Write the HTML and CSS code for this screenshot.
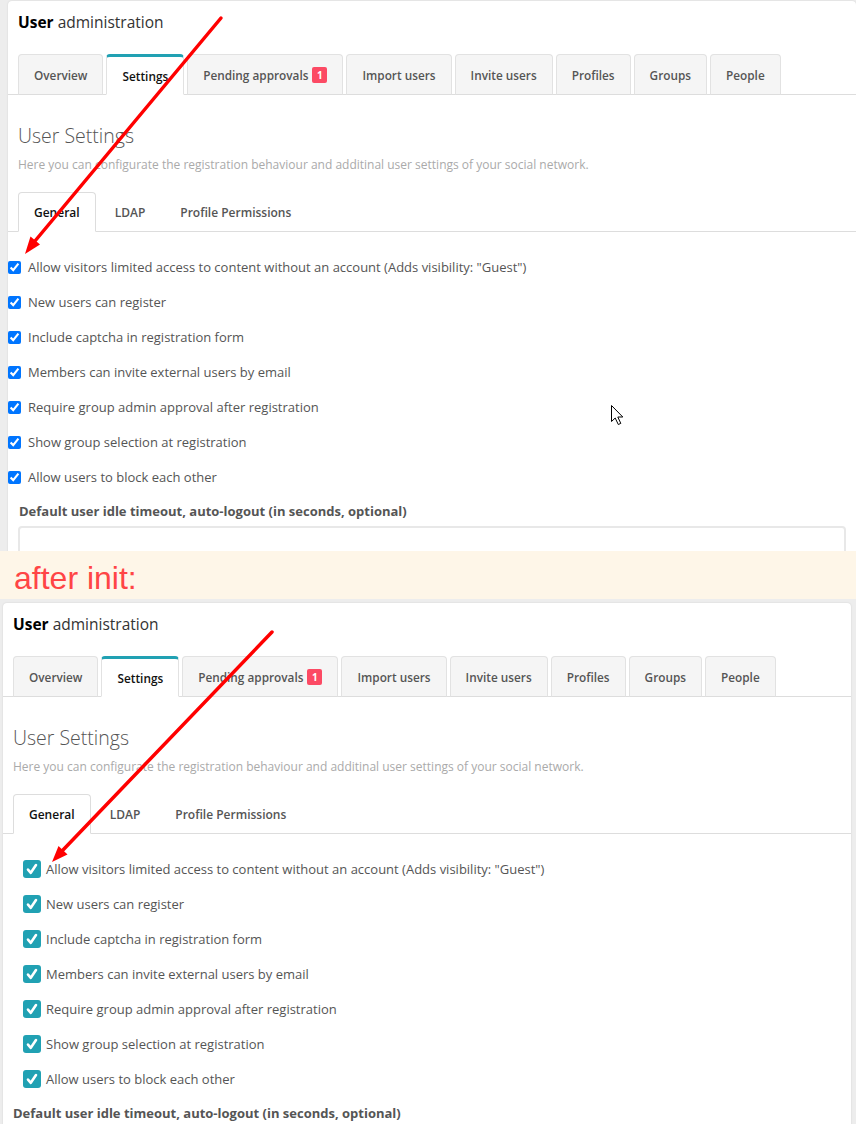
FILE: index.html
```html
<!DOCTYPE html>
<html lang="en">
<head>
<meta charset="UTF-8">
<title>User administration</title>
<link rel="stylesheet" href="styles.css">
</head>
<body>

<!-- before -->
<div class="shot shot-before">
  <div class="panel">
    <div class="panel-heading"><strong>User</strong> administration</div>
    <ul class="tabs">
      <li>Overview</li>
      <li class="active">Settings</li>
      <li>Pending approvals <span class="badge">1</span></li>
      <li>Import users</li>
      <li>Invite users</li>
      <li>Profiles</li>
      <li>Groups</li>
      <li>People</li>
    </ul>
    <div class="panel-body">
      <h1>User Settings</h1>
      <p class="help">Here you can configurate the registration behaviour and additinal user settings of your social network.</p>
    </div>
    <ul class="subtabs">
      <li class="active">General</li>
      <li>LDAP</li>
      <li>Profile Permissions</li>
    </ul>
    <div class="form">
      <label class="check"><input type="checkbox" checked>Allow visitors limited access to content without an account (Adds visibility: "Guest")</label>
      <label class="check"><input type="checkbox" checked>New users can register</label>
      <label class="check"><input type="checkbox" checked>Include captcha in registration form</label>
      <label class="check"><input type="checkbox" checked>Members can invite external users by email</label>
      <label class="check"><input type="checkbox" checked>Require group admin approval after registration</label>
      <label class="check"><input type="checkbox" checked>Show group selection at registration</label>
      <label class="check"><input type="checkbox" checked>Allow users to block each other</label>
      <div class="field-label">Default user idle timeout, auto-logout (in seconds, optional)</div>
      <div class="input"></div>
    </div>
  </div>
</div>

<div class="banner">after init:</div>

<!-- after -->
<div class="shot shot-after">
  <div class="panel">
    <div class="panel-heading"><strong>User</strong> administration</div>
    <ul class="tabs">
      <li>Overview</li>
      <li class="active">Settings</li>
      <li>Pending approvals <span class="badge">1</span></li>
      <li>Import users</li>
      <li>Invite users</li>
      <li>Profiles</li>
      <li>Groups</li>
      <li>People</li>
    </ul>
    <div class="panel-body">
      <h1>User Settings</h1>
      <p class="help">Here you can configurate the registration behaviour and additinal user settings of your social network.</p>
    </div>
    <ul class="subtabs">
      <li class="active">General</li>
      <li>LDAP</li>
      <li>Profile Permissions</li>
    </ul>
    <div class="form form-styled">
      <label class="check"><span class="box"><svg viewBox="0 0 18 18"><path d="M5 9.6 L7.8 12.8 L13 5"/></svg></span>Allow visitors limited access to content without an account (Adds visibility: "Guest")</label>
      <label class="check"><span class="box"><svg viewBox="0 0 18 18"><path d="M5 9.6 L7.8 12.8 L13 5"/></svg></span>New users can register</label>
      <label class="check"><span class="box"><svg viewBox="0 0 18 18"><path d="M5 9.6 L7.8 12.8 L13 5"/></svg></span>Include captcha in registration form</label>
      <label class="check"><span class="box"><svg viewBox="0 0 18 18"><path d="M5 9.6 L7.8 12.8 L13 5"/></svg></span>Members can invite external users by email</label>
      <label class="check"><span class="box"><svg viewBox="0 0 18 18"><path d="M5 9.6 L7.8 12.8 L13 5"/></svg></span>Require group admin approval after registration</label>
      <label class="check"><span class="box"><svg viewBox="0 0 18 18"><path d="M5 9.6 L7.8 12.8 L13 5"/></svg></span>Show group selection at registration</label>
      <label class="check"><span class="box"><svg viewBox="0 0 18 18"><path d="M5 9.6 L7.8 12.8 L13 5"/></svg></span>Allow users to block each other</label>
      <div class="field-label">Default user idle timeout, auto-logout (in seconds, optional)</div>
      <div class="input"></div>
    </div>
  </div>
</div>

<!-- annotations drawn over the screenshots -->
<svg class="annotations" width="856" height="1124" viewBox="0 0 856 1124">
  <g class="arrow">
    <line x1="221" y1="18" x2="35" y2="241"/>
    <polygon points="25,254 40,244.5 30.5,236.5"/>
  </g>
  <g class="arrow">
    <line x1="272" y1="632" x2="63" y2="850"/>
    <polygon points="52,862 67.5,854.5 58.5,846"/>
  </g>
  <path class="cursor" d="M611.5 405.5 L611.5 421.5 L615.2 418 L618.3 424.5 L620.8 423.4 L617.8 417 L622.8 417 Z"/>
</svg>

</body>
</html>
```

FILE: styles.css
```css
/* base */
* {
  margin: 0;
  padding: 0;
  box-sizing: border-box;
}

body {
  width: 856px;
  height: 1124px;
  overflow: hidden;
  position: relative;
  background: #ededed;
  font-family: "Open Sans", "Liberation Sans", sans-serif;
  font-size: 13px;
  color: #555;
}

ul {
  list-style: none;
}

/* screenshot frames */
.shot {
  overflow: hidden;
}
.shot-before {
  height: 551px;
  padding: 1px 0 0 8px;
}
.shot-after {
  height: 525px;
  padding: 4px 5px 0 3px;
}

.banner {
  height: 48px;
  background: #fef6e8;
  padding: 7px 0 0 14px;
  font-family: "Liberation Sans", Arial, sans-serif;
  font-size: 32px;
  line-height: 40px;
  color: #ff4545;
}

/* panel */
.panel {
  background: #fff;
  border-radius: 4px;
  box-shadow: 0 0 2px rgba(0,0,0,0.12);
  height: 700px;
}

.panel-heading {
  padding: 11px 10px 0;
  font-size: 15.5px;
  line-height: 20px;
  color: #333;
}
.panel-heading strong {
  font-weight: 700;
  color: #000;
}

/* main tabs */
.tabs {
  display: flex;
  gap: 3px;
  margin-top: 22px;
  padding: 0 10px;
  border-bottom: 1px solid #ddd;
}
.tabs li {
  height: 41px;
  margin-bottom: -1px;
  padding: 1px 15px 0;
  display: flex;
  align-items: center;
  gap: 4px;
  background: #f5f5f5;
  border: 1px solid #e2e2e2;
  border-bottom-color: #ddd;
  border-radius: 4px 4px 0 0;
  font-size: 11.8px;
  font-weight: 600;
  color: #555;
}
.tabs li.active {
  background: #fff;
  border-top: 3px solid #21a1b3;
  border-bottom-color: #fff;
  padding-top: 0;
  color: #111;
}

.badge {
  display: inline-block;
  min-width: 15px;
  height: 16px;
  padding: 0 4px;
  border-radius: 2px;
  background: #fc4a64;
  color: #fff;
  font-size: 10px;
  font-weight: 700;
  line-height: 16px;
  text-align: center;
}

/* panel body */
.panel-body {
  padding: 29px 10px 0;
}
.panel-body h1 {
  font-size: 19.5px;
  font-weight: 300;
  line-height: 24px;
  color: #555;
}
.help {
  margin-top: 8px;
  font-size: 12px;
  line-height: 17px;
  color: #aaa;
}

/* sub tabs */
.subtabs {
  display: flex;
  gap: 3px;
  margin-top: 19px;
  padding: 0 10px;
  border-bottom: 1px solid #ddd;
}
.subtabs li {
  height: 40px;
  margin-bottom: -1px;
  padding: 0 15px;
  display: flex;
  align-items: center;
  border: 1px solid transparent;
  border-radius: 4px 4px 0 0;
  font-size: 12px;
  font-weight: 600;
  color: #555;
}
.subtabs li.active {
  background: #fff;
  border-color: #ddd;
  border-bottom-color: #fff;
  color: #111;
}

/* form */
.form {
  display: flex;
  flex-direction: column;
  gap: 15px;
  padding: 25px 10px 0 0;
}
.check {
  height: 20px;
  display: flex;
  align-items: center;
  gap: 7px;
  line-height: 20px;
}
.check input {
  width: 13px;
  height: 13px;
  margin: 0;
}

.field-label {
  margin-left: 11px;
  font-weight: 700;
  line-height: 18px;
}
.input {
  margin: -9px 0 0 10px;
  height: 38px;
  border: 2px solid #e8e8e8;
  border-radius: 4px;
}

.form-styled {
  padding-left: 20px;
}
.form-styled .check {
  gap: 5px;
}
.form-styled .field-label {
  margin-left: -10px;
}
.box {
  width: 18px;
  height: 18px;
  border-radius: 3px;
  background: #21a1b3;
  display: flex;
}
.box svg {
  width: 18px;
  height: 18px;
}
.box path {
  fill: none;
  stroke: #fff;
  stroke-width: 2.6;
  stroke-linecap: round;
  stroke-linejoin: round;
}

/* annotations */
.annotations {
  position: absolute;
  top: 0;
  left: 0;
  pointer-events: none;
}
.arrow line {
  stroke: #f00;
  stroke-width: 3.5;
  stroke-linecap: round;
}
.arrow polygon {
  fill: #f00;
}
.cursor {
  fill: #fff;
  stroke: #000;
  stroke-width: 1;
}
```
